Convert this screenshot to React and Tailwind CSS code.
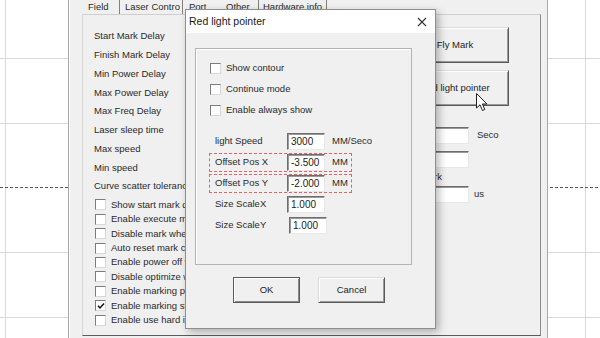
import React from "react";

function Cb({ checked }) {
  return (
    <span className="w-[11px] h-[11px] shrink-0 bg-white border border-t-[#7c7c7c] border-l-[#7c7c7c] border-r-[#d8d8d8] border-b-[#d8d8d8] flex items-center justify-center">
      {checked && (
        <svg width="8" height="8" viewBox="0 0 8 8">
          <path d="M1 3.8 L3 6 L7 1.5" stroke="#111" strokeWidth="1.5" fill="none" />
        </svg>
      )}
    </span>
  );
}

function Input({ value, w = "w-[38px]", extra = "" }) {
  return (
    <div className={`${w} ${extra} h-[17px] shrink-0 bg-white border border-t-[#6e6e6e] border-l-[#6e6e6e] border-r-[#e8e8e8] border-b-[#e8e8e8] shadow-[inset_1px_1px_0_#9a9a9a] flex items-center pl-[3px] text-[10px] text-[#222]`}>
      {value}
    </div>
  );
}

function WinButton({ children, def, w = "w-[67px]", h = "h-[26px]" }) {
  return (
    <div
      className={`${w} ${h} shrink-0 bg-[#f0f0f0] flex items-center justify-center text-[9.5px] text-[#222] border ${
        def
          ? "border-[#5a5a5a] shadow-[inset_1px_1px_0_#fff,inset_-1px_-1px_0_#8a8a8a]"
          : "border-t-[#dcdcdc] border-l-[#dcdcdc] border-r-[#5a5a5a] border-b-[#5a5a5a] shadow-[inset_1px_1px_0_#fff,inset_-1px_-1px_0_#9a9a9a]"
      }`}
    >
      {children}
    </div>
  );
}

const labels = [
  "Start Mark Delay",
  "Finish Mark Delay",
  "Min Power Delay",
  "Max Power Delay",
  "Max Freq Delay",
  "Laser sleep time",
  "Max speed",
  "Min speed",
  "Curve scatter tolerance",
];

const checks = [
  ["Show start mark dialog", false],
  ["Enable execute mark when open", false],
  ["Disable mark when door open", false],
  ["Auto reset mark count", false],
  ["Enable power off when exit", false],
  ["Disable optimize when mark", false],
  ["Enable marking part count", false],
  ["Enable marking start signal", true],
  ["Enable use hard input", false],
];

const fields = [
  ["light Speed", "3000", "MM/Second", false],
  ["Offset Pos X", "-3.500", "MM", true],
  ["Offset Pos Y", "-2.000", "MM", true],
  ["Size ScaleX", "1.000", "", false],
  ["Size ScaleY", "1.000", "", false],
];

export default function App() {
  return (
    <div className="relative w-[600px] h-[338px] overflow-hidden bg-white font-['Liberation_Sans',Arial,sans-serif] text-[#2a2a2a]">
      {/* canvas grid */}
      <svg className="absolute inset-0" width="600" height="338">
        <g stroke="#d9d9d9" strokeWidth="1">
          <line x1="5.5" y1="0" x2="5.5" y2="338" />
          <line x1="585.5" y1="0" x2="585.5" y2="338" />
          <line x1="0" y1="58.5" x2="600" y2="58.5" />
          <line x1="0" y1="123.5" x2="600" y2="123.5" />
          <line x1="0" y1="252.5" x2="600" y2="252.5" />
          <line x1="0" y1="317.5" x2="600" y2="317.5" />
        </g>
        <line x1="0" y1="187.5" x2="600" y2="187.5" stroke="#555" strokeWidth="1" strokeDasharray="3 2" />
      </svg>

      {/* main window */}
      <div className="absolute left-[68px] top-0 w-[480px] h-[338px] bg-[#f0f0f0] border-l border-r border-[#a8a8a8] shadow-[inset_1px_0_0_#fff] flex flex-col pl-[13px] pr-[6px] pb-[2px]">
        {/* tabs */}
        <div className="h-[14px] flex text-[9.5px] shrink-0">
          <div className="w-[38px] pl-[6px] flex items-center border-r border-[#808080]">Field</div>
          <div className="w-[63px] pl-[5px] flex items-center border-r border-[#808080] whitespace-nowrap overflow-hidden">Laser Contro</div>
          <div className="w-[38px] pl-[6px] flex items-center">Port</div>
          <div className="w-[38px] pl-[5px] flex items-center border-r border-[#808080]">Other</div>
          <div className="w-[68px] pl-[4px] flex items-center border-r border-[#808080] whitespace-nowrap">Hardware info</div>
        </div>
        {/* tab page */}
        <div className="flex-1 flex border border-t-[#cfcfcf] border-l-[#d6d6d6] border-r-[#8c8c8c] border-b-[#5c5c5c]">
          {/* left column */}
          <div className="w-[300px] shrink-0 flex flex-col pl-[11px] pt-[12px] text-[9.5px]">
            {labels.map((l) => (
              <div key={l} className="h-[18.75px] flex items-center whitespace-nowrap">
                {l}
              </div>
            ))}
            <div className="mt-[2px] flex flex-col">
              {checks.map(([l, c]) => (
                <div key={l} className="h-[14.4px] flex items-center gap-[5px] whitespace-nowrap pl-[1px]">
                  <Cb checked={c} />
                  <span>{l}</span>
                </div>
              ))}
            </div>
          </div>
          {/* right column */}
          <div className="flex-1 flex flex-col items-end pt-[12px] text-[9.5px]">
            <div className="mr-[31px] flex flex-col gap-[7px]">
              <WinButton w="w-[108px]" h="h-[36px]">Fly Mark</WinButton>
              <WinButton w="w-[108px]" h="h-[36px]">Red light pointer</WinButton>
            </div>
            <div className="mt-[21px] flex items-center">
              <Input value="" w="w-[60px]" />
              <span className="w-[71px] pl-[8px]">
                <span className="block w-[22px] overflow-hidden whitespace-nowrap">Second</span>
              </span>
            </div>
            <div className="mt-[7px] flex items-center">
              <Input value="" w="w-[60px]" />
              <span className="w-[71px] pl-[8px]"></span>
            </div>
            <div className="mt-[3px] mr-[98px] w-[6px] h-[11px] overflow-hidden flex justify-end">
              <span className="shrink-0 leading-[11px] whitespace-nowrap">Delay of mark</span>
            </div>
            <div className="mt-[4px] flex items-center">
              <Input value="" w="w-[60px]" />
              <span className="w-[71px] pl-[5px]">us</span>
            </div>
          </div>
        </div>
      </div>

      {/* dialog */}
      <div className="absolute left-[185px] top-[9px] w-[251px] h-[320px] bg-[#f0f0f0] border border-[#8e8e8e] shadow-[3px_3px_8px_rgba(0,0,0,0.28)] flex flex-col">
        <div className="h-[23px] shrink-0 bg-white flex items-center justify-between pl-[3px] pr-[8px]">
          <span className="text-[10.5px] text-[#1a1a1a]">Red light pointer</span>
          <svg width="10" height="10" viewBox="0 0 10 10">
            <path d="M1 1 L9 9 M9 1 L1 9" stroke="#333" strokeWidth="1.1" />
          </svg>
        </div>
        <div className="flex-1 flex flex-col pl-[9px] pt-[15px]">
          <div className="w-[217px] h-[217px] border border-[#b4b4b4] shadow-[inset_1px_1px_0_#fff] flex flex-col pt-[8.5px] text-[9.5px]">
            <div className="pl-[14px] flex flex-col">
              {["Show contour", "Continue mode", "Enable always show"].map((l) => (
                <div key={l} className="h-[21px] flex items-center gap-[5px]">
                  <Cb />
                  <span>{l}</span>
                </div>
              ))}
            </div>
            <div className="mt-[10px] pl-[13px] flex flex-col">
              {fields.map(([l, v, u, hl], i) => (
                <div key={l} className="h-[21px] flex items-center">
                  <div
                    className={`h-[19px] w-[143px] flex items-center pl-[5px] border border-dashed ${
                      hl ? "border-[#e06464]" : "border-transparent"
                    }`}
                  >
                    <span className="w-[72px] shrink-0 whitespace-nowrap leading-[12px]">{l}</span>
                    <Input value={v} extra={i === 4 ? "ml-[2px]" : ""} />
                    {u && (
                      <span className="ml-[7px] shrink-0 whitespace-nowrap overflow-hidden w-[40px] leading-[12px]">{u}</span>
                    )}
                  </div>
                </div>
              ))}
            </div>
          </div>
          <div className="mt-[12px] flex pl-[38px] gap-[18px]">
            <WinButton def>OK</WinButton>
            <WinButton>Cancel</WinButton>
          </div>
        </div>
      </div>

      {/* mouse cursor */}
      <svg className="absolute left-[476px] top-[93px]" width="13" height="19" viewBox="0 0 13 19">
        <path d="M0.5 0.5 L0.5 15 L4 11.8 L6.5 17.5 L8.8 16.5 L6.4 11 L11 11 Z" fill="#fff" stroke="#222" strokeWidth="1" />
      </svg>
    </div>
  );
}
